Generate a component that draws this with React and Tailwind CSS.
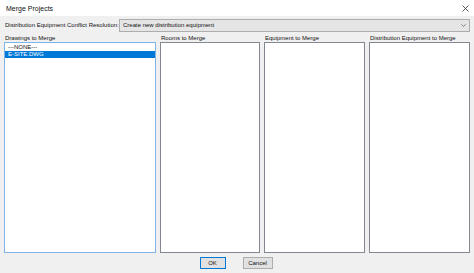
export default function App() {
    const columns = [
        { title: "Rooms to Merge", w: "w-[100px]" },
        { title: "Equipment to Merge", w: "w-[101px]" },
        { title: "Distribution Equipment to Merge", w: "w-[101px]" },
    ];

    return (
        <div className="w-[474px] h-[273px] flex flex-col bg-[#f0f0f0] text-[6px] leading-[7px] text-[#111] font-['Liberation_Sans',Arial,sans-serif] overflow-hidden">
            {/* title bar */}
            <div className="h-[16px] bg-white flex items-center justify-between pl-[6px] pr-[5px] shrink-0">
                <span className="text-[7px]">Merge Projects</span>
                <svg width="7" height="7" viewBox="0 0 7 7" className="text-[#333]">
                    <path d="M0.5 0.5 L6.5 6.5 M6.5 0.5 L0.5 6.5" stroke="currentColor" strokeWidth="0.8" />
                </svg>
            </div>

            {/* conflict resolution row */}
            <div className="flex items-center pl-[5px] pr-[4px] mt-[3px] h-[13px] shrink-0">
                <span className="w-[114px] shrink-0 whitespace-nowrap">Distribution Equipment Conflict Resolution:</span>
                <div className="flex-1 h-[13px] flex items-center justify-between bg-[#e5e5e5] border border-[#adadad] pl-[3px] pr-[3px]">
                    <span>Create new distribution equipment</span>
                    <svg width="5" height="3" viewBox="0 0 5 3">
                        <path d="M0.3 0.3 L2.5 2.5 L4.7 0.3" fill="none" stroke="#555" strokeWidth="0.7" />
                    </svg>
                </div>
            </div>

            {/* lists */}
            <div className="flex gap-[4px] pl-[4px] mt-[3px] shrink-0">
                <div className="flex flex-col w-[152px] shrink-0">
                    <span className="pl-[1px] h-[7px] whitespace-nowrap">Drawings to Merge</span>
                    <div className="h-[211px] bg-white border border-[#7eb4ea] pt-[1px]">
                        <div className="h-[7px] pl-[3px]">---NONE---</div>
                        <div className="h-[7px] pl-[3px] bg-[#0078d7] text-white">E-SITE.DWG</div>
                    </div>
                </div>
                {columns.map((c) => (
                    <div key={c.title} className={`flex flex-col shrink-0 ${c.w}`}>
                        <span className="pl-[1px] h-[7px] whitespace-nowrap">{c.title}</span>
                        <div className="h-[211px] bg-white border border-[#828790]" />
                    </div>
                ))}
            </div>

            {/* buttons */}
            <div className="flex justify-center gap-[17px] mt-[4px] pr-[2px]">
                <button className="w-[26px] h-[12px] bg-[#e1e1e1] border border-[#0078d7] text-[6px] leading-[10px]">
                    OK
                </button>
                <button className="w-[30px] h-[12px] bg-[#e1e1e1] border border-[#adadad] text-[6px] leading-[10px]">
                    Cancel
                </button>
            </div>
        </div>
    );
}
